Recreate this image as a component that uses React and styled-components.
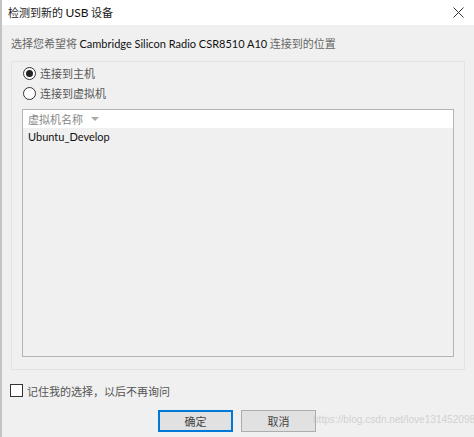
import React from "react";
import styled, { createGlobalStyle } from "styled-components";

const Global = createGlobalStyle`
  html, body { margin: 0; padding: 0; background: #f0f0f0; }
  * { box-sizing: border-box; }
`;

const cjk = `"Noto Sans CJK SC", "Noto Sans", sans-serif`;
const latin = `Lato, "Noto Sans", "Noto Sans CJK SC", sans-serif`;

const Window = styled.div`
  position: relative;
  width: 474px;
  height: 437px;
  background: #f0f0f0;
  border-left: 2px solid #c4c4c4;
  display: flex;
  flex-direction: column;
  overflow: hidden;
`;

const TitleBar = styled.div`
  height: 25px;
  background: #ffffff;
  display: flex;
  align-items: center;
  justify-content: space-between;
  padding: 0 10px 0 6px;
  flex-shrink: 0;
`;

const Title = styled.div`
  font-family: ${cjk};
  font-size: 11px;
  color: #1a1a1a;
  line-height: 18px;
`;

const Latin = styled.span`
  font-family: ${latin};
  font-size: ${(p) => p.$size || 11}px;
  font-weight: 400;
  color: ${(p) => p.$color || "#111"};
`;

const Body = styled.div`
  flex: 1;
  display: flex;
  flex-direction: column;
  padding: 9px 9px 0 9px;
`;

const Prompt = styled.div`
  font-family: ${cjk};
  font-size: 11px;
  color: #666;
  line-height: 18px;
  height: 18px;
  white-space: nowrap;
`;

const Group = styled.div`
  margin-top: 9px;
  height: 309px;
  border: 1px solid #e3e3e3;
  display: flex;
  flex-direction: column;
  padding: 2px 10px 12px 10px;
`;

const RadioRow = styled.label`
  display: flex;
  align-items: center;
  height: 20px;
  gap: 4px;
  font-family: ${cjk};
  font-size: 11px;
  color: #555;
  padding-left: 1px;
  margin-top: ${(p) => (p.$first ? "-1px" : "0")};
`;

const RadioCircle = styled.span`
  width: 13px;
  height: 13px;
  border-radius: 50%;
  border: 1px solid #333;
  background: #fff;
  display: flex;
  align-items: center;
  justify-content: center;
  &::after {
    content: "";
    width: 7px;
    height: 7px;
    border-radius: 50%;
    background: ${(p) => (p.$checked ? "#222" : "transparent")};
  }
`;

const ListBox = styled.div`
  margin-top: 6px;
  flex: 1;
  border: 1px solid #b4b4b4;
  background: #f0f0f0;
  display: flex;
  flex-direction: column;
`;

const ListHeader = styled.div`
  height: 18px;
  background: #ffffff;
  display: flex;
  align-items: center;
  padding-left: 5px;
  gap: 8px;
  font-family: ${cjk};
  font-size: 11px;
  color: #888;
`;

const SortArrow = styled.span`
  width: 0;
  height: 0;
  border-left: 4px solid transparent;
  border-right: 4px solid transparent;
  border-top: 4px solid #aaa;
`;

const ListItem = styled.div`
  height: 16px;
  display: flex;
  align-items: center;
  padding-left: 5px;
`;

const CheckRow = styled.label`
  margin-top: 13px;
  display: flex;
  align-items: center;
  gap: 4px;
  height: 15px;
  font-family: ${cjk};
  font-size: 11px;
  color: #555;
  margin-left: -1px;
`;

const CheckBox = styled.span`
  width: 13px;
  height: 13px;
  border: 1px solid #333;
  background: #fff;
`;

const ButtonRow = styled.div`
  margin-top: 12px;
  display: flex;
  gap: 8px;
  padding-left: 147px;
`;

const Button = styled.button`
  width: 75px;
  height: 22px;
  background: #e1e1e1;
  border: 1px solid ${(p) => (p.$primary ? "#0078d7" : "#adadad")};
  box-shadow: ${(p) => (p.$primary ? "inset 0 0 0 1px #0078d7" : "none")};
  font-family: ${cjk};
  font-size: 11px;
  color: #444;
  padding: 0;
  display: flex;
  align-items: center;
  justify-content: center;
`;

const Watermark = styled.div`
  position: absolute;
  left: 311px;
  top: 414px;
  font-family: "Liberation Sans", sans-serif;
  font-size: 10.1px;
  color: rgba(200, 200, 200, 0.8);
  white-space: nowrap;
  pointer-events: none;
`;

const CloseIcon = () => (
  <svg width="11" height="11" viewBox="0 0 11 11">
    <path d="M0.5 0.5 L10.5 10.5 M10.5 0.5 L0.5 10.5" stroke="#333" strokeWidth="1" />
  </svg>
);

export default function App() {
  return (
    <>
      <Global />
      <Window>
        <TitleBar>
          <Title>
            检测到新的 <Latin $size={12}>USB</Latin> 设备
          </Title>
          <CloseIcon />
        </TitleBar>
        <Body>
          <Prompt>
            选择您希望将 <Latin>Cambridge Silicon Radio CSR8510 A10</Latin> 连接到的位置
          </Prompt>
          <Group>
            <RadioRow $first>
              <RadioCircle $checked />
              连接到主机
            </RadioRow>
            <RadioRow>
              <RadioCircle />
              连接到虚拟机
            </RadioRow>
            <ListBox>
              <ListHeader>
                虚拟机名称
                <SortArrow />
              </ListHeader>
              <ListItem>
                <Latin>Ubuntu_Develop</Latin>
              </ListItem>
            </ListBox>
          </Group>
          <CheckRow>
            <CheckBox />
            记住我的选择，以后不再询问
          </CheckRow>
          <ButtonRow>
            <Button $primary>确定</Button>
            <Button>取消</Button>
          </ButtonRow>
        </Body>
        <Watermark>https://blog.csdn.net/love131452098</Watermark>
      </Window>
    </>
  );
}
